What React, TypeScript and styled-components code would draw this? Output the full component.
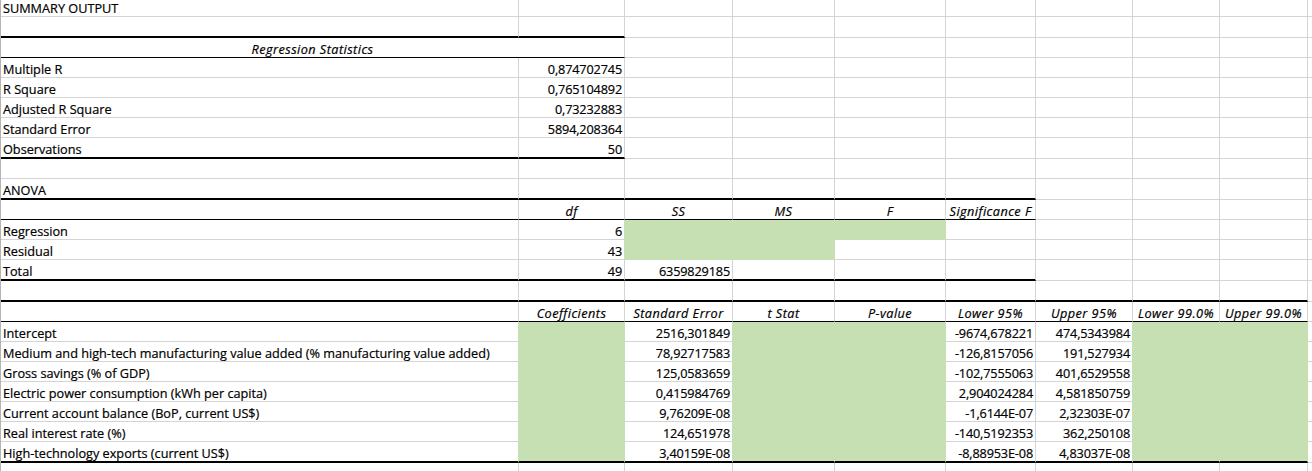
import React from "react";
import styled, { createGlobalStyle } from "styled-components";

const GRID = "#d4d4d4";
const GREEN = "#c6e0b4";
const INK = "#000000";

const GlobalStyle = createGlobalStyle`
  html, body { margin: 0; padding: 0; background: #ffffff; }
  body { font-family: "Open Sans", "Noto Sans", sans-serif; color: ${INK}; }
  #root { width: 1312px; height: 471px; overflow: hidden; }
`;

const COLUMNS = "518px 106px 108px 102px 111px 90px 97px 87px 88px 1fr";

const Sheet = styled.div`
  display: flex;
  flex-direction: column;
  border-left: 1px solid #b4b4b4;
  width: 1311px;
`;

const Row = styled.div<{ $h: number }>`
  display: grid;
  grid-template-columns: ${COLUMNS};
  height: ${(p) => p.$h}px;
  flex: none;
`;

type Align = "left" | "right" | "center";
type Bottom = "grid" | "thin" | "thick";

const Cell = styled.div<{
  $align: Align;
  $italic: boolean;
  $num: boolean;
  $fill: boolean;
  $bottom: Bottom;
  $rightGreen: boolean;
  $span: number;
}>`
  box-sizing: border-box;
  grid-column: span ${(p) => p.$span};
  display: flex;
  align-items: flex-end;
  justify-content: ${(p) =>
    p.$align === "right" ? "flex-end" : p.$align === "center" ? "center" : "flex-start"};
  padding: 0 2px 1px 2px;
  min-width: 0;
  overflow: hidden;
  white-space: nowrap;
  background: ${(p) => (p.$fill ? GREEN : "#ffffff")};
  border-right: 1px solid ${(p) => (p.$fill || p.$rightGreen ? GREEN : GRID)};
  border-bottom: ${(p) =>
    p.$bottom === "thick"
      ? `2px solid ${INK}`
      : p.$bottom === "thin"
      ? `1px solid ${INK}`
      : `1px solid ${p.$fill ? GREEN : GRID}`};
  font-size: 12.7px;
  line-height: 14px;
  -webkit-text-stroke: 0.2px ${INK};
  font-style: ${(p) => (p.$italic ? "italic" : "normal")};
  letter-spacing: ${(p) => (p.$italic ? "0.45px" : p.$num ? "-0.15px" : "0")};
`;

type CellSpec = {
  text?: string;
  kind?: "label" | "num" | "head";
  fill?: boolean;
  bottom?: Bottom;
  span?: number;
};

type RowSpec = { h: number; cells: CellSpec[] };

const NCOL = 10;

function makeRow(
  h: number,
  content: (CellSpec | null)[],
  opts: { bottom?: Bottom; bottomTo?: number; green?: number[]; merge?: [number, number] } = {}
): RowSpec {
  const cells: CellSpec[] = [];
  const green = new Set(opts.green ?? []);
  let i = 0;
  while (i < NCOL) {
    const spec = content[i] ?? {};
    const span = opts.merge && opts.merge[0] === i ? opts.merge[1] : 1;
    const bottom: Bottom =
      opts.bottom && opts.bottomTo !== undefined && i <= opts.bottomTo ? opts.bottom : "grid";
    cells.push({ ...spec, fill: green.has(i), bottom, span });
    i += span;
  }
  return { h, cells };
}

const L = (text: string): CellSpec => ({ text, kind: "label" });
const N = (text: string): CellSpec => ({ text, kind: "num" });
const H = (text: string): CellSpec => ({ text, kind: "head" });

const coefficients: [string, string, string, string][] = [
  ["Intercept", "2516,301849", "-9674,678221", "474,5343984"],
  ["Medium and high-tech manufacturing value added (% manufacturing value added)", "78,92717583", "-126,8157056", "191,527934"],
  ["Gross savings (% of GDP)", "125,0583659", "-102,7555063", "401,6529558"],
  ["Electric power consumption (kWh per capita)", "0,415984769", "2,904024284", "4,581850759"],
  ["Current account balance (BoP, current US$)", "9,76209E-08", "-1,6144E-07", "2,32303E-07"],
  ["Real interest rate (%)", "124,651978", "-140,5192353", "362,250108"],
  ["High-technology exports (current US$)", "3,40159E-08", "-8,88953E-08", "4,83037E-08"],
];

const rows: RowSpec[] = [
  makeRow(17, [L("SUMMARY OUTPUT")]),
  makeRow(21, [], { bottom: "thick", bottomTo: 1 }),
  makeRow(20, [H("Regression Statistics")], { bottom: "thin", bottomTo: 1, merge: [0, 2] }),
  makeRow(20, [L("Multiple R"), N("0,874702745")]),
  makeRow(20, [L("R Square"), N("0,765104892")]),
  makeRow(20, [L("Adjusted R Square"), N("0,73232883")]),
  makeRow(20, [L("Standard Error"), N("5894,208364")]),
  makeRow(21, [L("Observations"), N("50")], { bottom: "thick", bottomTo: 1 }),
  makeRow(20, []),
  makeRow(21, [L("ANOVA")], { bottom: "thick", bottomTo: 5 }),
  makeRow(20, [null, H("df"), H("SS"), H("MS"), H("F"), H("Significance F")], {
    bottom: "thin",
    bottomTo: 5,
  }),
  makeRow(20, [L("Regression"), N("6")], { green: [2, 3, 4] }),
  makeRow(20, [L("Residual"), N("43")], { green: [2, 3] }),
  makeRow(21, [L("Total"), N("49"), N("6359829185")], { bottom: "thick", bottomTo: 5 }),
  makeRow(21, [], { bottom: "thick", bottomTo: 8 }),
  makeRow(
    20,
    [
      null,
      H("Coefficients"),
      H("Standard Error"),
      H("t Stat"),
      H("P-value"),
      H("Lower 95%"),
      H("Upper 95%"),
      H("Lower 99.0%"),
      H("Upper 99.0%"),
    ],
    { bottom: "thin", bottomTo: 8 }
  ),
  ...coefficients.map(([label, se, lo, hi], idx) =>
    makeRow(
      idx === coefficients.length - 1 ? 21 : 20,
      [L(label), null, N(se), null, null, N(lo), N(hi)],
      {
        green: [1, 3, 4, 7, 8],
        ...(idx === coefficients.length - 1 ? { bottom: "thick" as Bottom, bottomTo: 8 } : {}),
      }
    )
  ),
  makeRow(20, []),
];

export default function App() {
  return (
    <>
      <GlobalStyle />
      <Sheet>
        {rows.map((row, r) => {
          let col = 0;
          return (
            <Row key={r} $h={row.h}>
              {row.cells.map((c, k) => {
                const start = col;
                col += c.span ?? 1;
                const next = row.cells[k + 1];
                const kind = c.kind ?? "label";
                return (
                  <Cell
                    key={start}
                    $span={c.span ?? 1}
                    $align={kind === "num" ? "right" : kind === "head" ? "center" : "left"}
                    $italic={kind === "head"}
                    $num={kind === "num"}
                    $fill={!!c.fill}
                    $bottom={c.bottom ?? "grid"}
                    $rightGreen={!!next?.fill}
                  >
                    {c.text}
                  </Cell>
                );
              })}
            </Row>
          );
        })}
      </Sheet>
    </>
  );
}
